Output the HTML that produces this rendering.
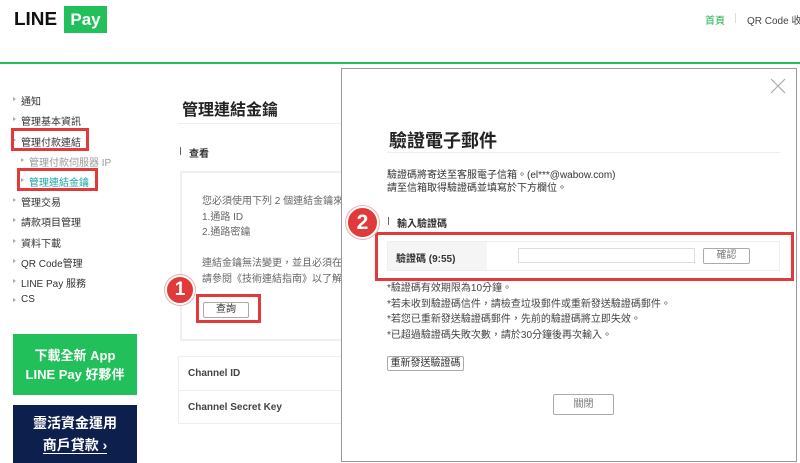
<!DOCTYPE html>
<html><head><meta charset="utf-8"><style>
*{margin:0;padding:0;box-sizing:border-box}
body{width:800px;height:463px;overflow:hidden;background:#fff;position:relative;font-family:"Liberation Sans","Noto Sans CJK TC",sans-serif;color:#333}
.a{position:absolute;white-space:nowrap}
.nav{font-size:10px;color:#333}
.nav:before{content:"";position:absolute;left:-8px;top:4px;border-left:3px solid #aaa;border-top:2.5px solid transparent;border-bottom:2.5px solid transparent}
.red{position:absolute;border:3px solid #e03a3a}
.badge{position:absolute;border-radius:50%;background:#e03a3a;color:#fff;font-weight:bold;text-align:center;border:2px solid #fff;box-shadow:0 0 0 1px #e8b0b0}
.btn{position:absolute;border:1px solid #aaa;border-radius:2px;background:#fff;font-size:10px;text-align:center;color:#555}
</style></head><body>
<div class="a" style="left:14px;top:9px;font-size:18px;font-weight:bold;color:#111;transform:scaleX(1.05);transform-origin:left">LINE</div>
<div class="a" style="left:64px;top:6px;width:43px;height:27px;background:#22c05a;color:#fff;font-size:17px;font-weight:bold;text-align:center;line-height:27px">Pay</div>
<div class="a" style="left:705px;top:12px;font-size:10px;color:#22b552">首頁</div>
<div class="a" style="left:735px;top:13px;width:1px;height:10px;background:#ddd"></div>
<div class="a" style="left:747px;top:12px;font-size:10px;color:#444">QR Code 收款</div>
<div class="a" style="left:0;top:62px;width:800px;height:2px;background:#22c05a"></div>

<div class="a nav" style="left:21px;top:93px">通知</div>
<div class="a nav" style="left:21px;top:113px">管理基本資訊</div>
<div class="a nav" style="left:21px;top:134px">管理付款連結</div>
<div class="a nav" style="left:29px;top:154px;color:#999">管理付款伺服器 IP</div>
<div class="a nav" style="left:29px;top:174px;color:#1aa6a6">管理連結金鑰</div>
<div class="a nav" style="left:21px;top:194px">管理交易</div>
<div class="a nav" style="left:21px;top:214px">請款項目管理</div>
<div class="a nav" style="left:21px;top:235px">資料下載</div>
<div class="a nav" style="left:21px;top:255px">QR Code管理</div>
<div class="a nav" style="left:21px;top:275px">LINE Pay 服務</div>
<div class="a nav" style="left:21px;top:294px">CS</div>
<div class="red" style="left:11px;top:128px;width:78px;height:23px"></div>
<div class="red" style="left:17px;top:168px;width:81px;height:23px"></div>

<div class="a" style="left:13px;top:334px;width:124px;height:61px;background:#22c05a;color:#fff;font-weight:bold;font-size:13px;text-align:center;line-height:19px;padding-top:12px">下載全新 App<br>LINE Pay 好夥伴</div>
<div class="a" style="left:13px;top:405px;width:124px;height:58px;background:#0d1f4d;color:#fff;font-weight:bold;font-size:14px;text-align:center;line-height:22px;padding-top:7px">靈活資金運用<br><span style="border-bottom:1px solid #fff">商戶貸款 ›</span></div>

<div class="a" style="left:182px;top:96px;font-size:16px;font-weight:bold;color:#222">管理連結金鑰</div>
<div class="a" style="left:178px;top:123px;width:170px;height:1px;background:#eee"></div>
<div class="a" style="left:180px;top:147px;width:1px;height:8px;background:#666"></div>
<div class="a" style="left:189px;top:145px;font-size:10px;font-weight:bold">查看</div>
<div class="a" style="left:180px;top:171px;width:170px;height:170px;border:2px solid #f0f0f0"></div>
<div class="a" style="left:202px;top:194px;font-size:10px;color:#666;line-height:15.5px">您必須使用下列 2 個連結金鑰來驗<br>1.通路 ID<br>2.通路密鑰<br><br>連結金鑰無法變更，並且必須在與<br>請參閱《技術連結指南》以了解使</div>
<div class="btn" style="left:203px;top:302px;width:46px;height:16px;line-height:14px;color:#333">查詢</div>
<div class="red" style="left:196px;top:294px;width:65px;height:29px"></div>
<div class="badge" style="left:165px;top:275px;width:30px;height:30px;font-size:19px;line-height:26px">1</div>
<div class="a" style="left:178px;top:356px;width:170px;height:68px;border:1px solid #eee"></div>
<div class="a" style="left:178px;top:390px;width:170px;height:1px;background:#eee"></div>
<div class="a" style="left:188px;top:368px;font-size:10px;font-weight:bold;color:#444">Channel ID</div>
<div class="a" style="left:188px;top:402px;font-size:10px;font-weight:bold;color:#444">Channel Secret Key</div>

<div class="a" style="left:341px;top:68px;width:456px;height:394px;border:1px solid #999;background:#fff"></div>
<svg class="a" style="left:770px;top:78px" width="16" height="16"><path d="M1 1L15 15M15 1L1 15" stroke="#aaa" stroke-width="1.2"/></svg>
<div class="a" style="left:389px;top:127px;font-size:18px;font-weight:bold;color:#222">驗證電子郵件</div>
<div class="a" style="left:387px;top:152px;width:393px;height:1px;background:#eee"></div>
<div class="a" style="left:387px;top:169px;font-size:10px;line-height:13px;color:#333">驗證碼將寄送至客服電子信箱。(el***@wabow.com)<br>請至信箱取得驗證碼並填寫於下方欄位。</div>
<div class="a" style="left:388px;top:217px;width:1px;height:8px;background:#666"></div>
<div class="a" style="left:397px;top:215px;font-size:10px;font-weight:bold">輸入驗證碼</div>
<div class="a" style="left:387px;top:241px;width:393px;height:30px;border:1px solid #eee"></div>
<div class="a" style="left:388px;top:242px;width:99px;height:28px;background:#f5f5f5"></div>
<div class="a" style="left:396px;top:250px;font-size:10px;font-weight:bold">驗證碼 (9:55)</div>
<div class="a" style="left:518px;top:248px;width:177px;height:15px;border:1px solid #ddd"></div>
<div class="btn" style="left:703px;top:248px;width:47px;height:16px;line-height:14px;color:#777">確認</div>
<div class="red" style="left:375px;top:232px;width:419px;height:49px"></div>
<div class="badge" style="left:346px;top:206px;width:33px;height:33px;font-size:21px;line-height:29px">2</div>
<div class="a" style="left:387px;top:281px;font-size:10px;line-height:15.5px;color:#444">*驗證碼有效期限為10分鐘。<br>*若未收到驗證碼信件，請檢查垃圾郵件或重新發送驗證碼郵件。<br>*若您已重新發送驗證碼郵件，先前的驗證碼將立即失效。<br>*已超過驗證碼失敗次數，請於30分鐘後再次輸入。</div>
<div class="btn" style="left:387px;top:356px;width:77px;height:15px;line-height:13px;color:#333">重新發送驗證碼</div>
<div class="btn" style="left:553px;top:394px;width:61px;height:21px;line-height:19px;color:#777">關閉</div>
</body></html>
